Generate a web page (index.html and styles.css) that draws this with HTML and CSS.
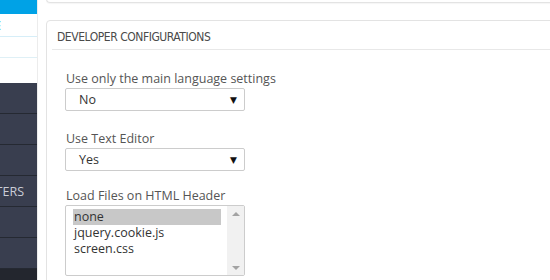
FILE: index.html
```html
<!DOCTYPE html>
<html>
<head>
<meta charset="utf-8">
<link rel="stylesheet" href="styles.css">
</head>
<body>
<div class="page">
  <aside class="sidebar">
    <div class="sb-top"></div>
    <div class="sb-link"><span>SITE</span></div>
    <div class="sb-sub"></div>
    <div class="sb-gap"></div>
    <div class="sb-item"></div>
    <div class="sb-item"></div>
    <div class="sb-item"></div>
    <div class="sb-item"><span>TERS</span></div>
    <div class="sb-item"></div>
    <div class="sb-item"></div>
    <div class="sb-foot"></div>
  </aside>
  <main class="main">
    <div class="panel-top"></div>
    <section class="panel">
      <div class="panel-head">DEVELOPER CONFIGURATIONS</div>
      <div class="panel-body">
        <div class="field">
          <div class="label">Use only the main language settings</div>
          <div class="select"><span>No</span><span class="arrow">▼</span></div>
        </div>
        <div class="field tight">
          <div class="label">Use Text Editor</div>
          <div class="select"><span>Yes</span><span class="arrow">▼</span></div>
        </div>
        <div class="field">
          <div class="label">Load Files on HTML Header</div>
          <div class="listbox">
            <div class="options">
              <div class="opt selected">none</div>
              <div class="opt">jquery.cookie.js</div>
              <div class="opt">screen.css</div>
            </div>
            <div class="scrollbar">
              <span class="tri up"></span>
              <span class="tri down"></span>
            </div>
          </div>
        </div>
      </div>
    </section>
  </main>
</div>
</body>
</html>
```
FILE: styles.css
```css
* { box-sizing: border-box; }
html, body { margin: 0; padding: 0; }
body {
  width: 550px;
  height: 280px;
  overflow: hidden;
  background: #ffffff;
  font-family: "Open Sans", "Liberation Sans", sans-serif;
}
.page {
  display: flex;
  height: 280px;
}
.sidebar {
  width: 38px;
  flex: none;
  display: flex;
  flex-direction: column;
  overflow: hidden;
  border-right: 1px solid #ececec;
}
.sb-top {
  height: 14px;
  background: #00a2e6;
}
.sb-link {
  height: 23px;
  border-bottom: 1px solid #d6eef8;
  display: flex;
  justify-content: flex-end;
  align-items: center;
  padding-right: 36px;
  font-size: 12px;
  font-weight: 600;
  color: #3fb3e6;
  white-space: nowrap;
}
.sb-sub {
  height: 21px;
  border-bottom: 1px solid #dff0f6;
}
.sb-gap {
  height: 25px;
}
.sb-item {
  height: 31px;
  background: #393e4f;
  border-bottom: 1px solid #252932;
  display: flex;
  justify-content: flex-end;
  align-items: center;
  padding-right: 13px;
  font-size: 12.5px;
  color: #c9cdd6;
  white-space: nowrap;
}
.sb-foot {
  flex: 1;
  background: #23262e;
}
.main {
  flex: 1;
  padding-left: 8px;
  overflow: hidden;
}
.panel-top {
  height: 4px;
  margin-top: -1px;
  border: 1px solid #e3e3e3;
  border-top: none;
  border-radius: 0 0 4px 4px;
  box-shadow: 0 1px 1px rgba(0,0,0,0.04);
  margin-right: -10px;
}
.panel {
  margin-top: 17px;
  margin-right: -10px;
  border: 1px solid #e3e3e3;
  border-radius: 4px;
  height: 300px;
  background: #fff;
}
.panel-head {
  margin: 0 5px;
  padding: 9px 5px 0;
  height: 29px;
  border-bottom: 1px solid #e8e8e8;
  font-family: "DejaVu Sans Condensed", "Liberation Sans Narrow", "Roboto", sans-serif;
  font-stretch: condensed;
  font-size: 12px;
  letter-spacing: -0.45px;
  color: #4a4a4a;
}
.panel-body {
  padding: 20px 0 0 18px;
}
.field {
  margin-bottom: 19px;
}
.field.tight {
  margin-bottom: 16px;
}
.label {
  font-size: 12.5px;
  line-height: 18px;
  color: #555555;
  padding-left: 1px;
}
.select {
  width: 180px;
  height: 23px;
  border: 1px solid #cccccc;
  border-radius: 2px;
  display: flex;
  justify-content: space-between;
  align-items: center;
  padding: 0 7px 0 13px;
  font-size: 12.5px;
  color: #333333;
  background: #fff;
}
.arrow {
  font-size: 9px;
  color: #111;
  font-family: "DejaVu Sans", sans-serif;
}
.listbox {
  width: 180px;
  height: 71px;
  border: 1px solid #cccccc;
  border-radius: 2px;
  display: flex;
  background: #fff;
}
.options {
  flex: 1;
  padding: 3px 6px 0 7px;
}
.opt {
  height: 16px;
  line-height: 16px;
  font-size: 12.5px;
  color: #333333;
  padding-left: 1px;
}
.opt.selected {
  background: #c8c8c8;
}
.scrollbar {
  width: 17px;
  background: #f1f1f1;
  display: flex;
  flex-direction: column;
  justify-content: space-between;
  align-items: center;
  padding: 6px 0 5px;
}
.tri {
  width: 0;
  height: 0;
  border-left: 4px solid transparent;
  border-right: 4px solid transparent;
}
.tri.up { border-bottom: 4px solid #a3a3a3; }
.tri.down { border-top: 4px solid #a3a3a3; }
```
